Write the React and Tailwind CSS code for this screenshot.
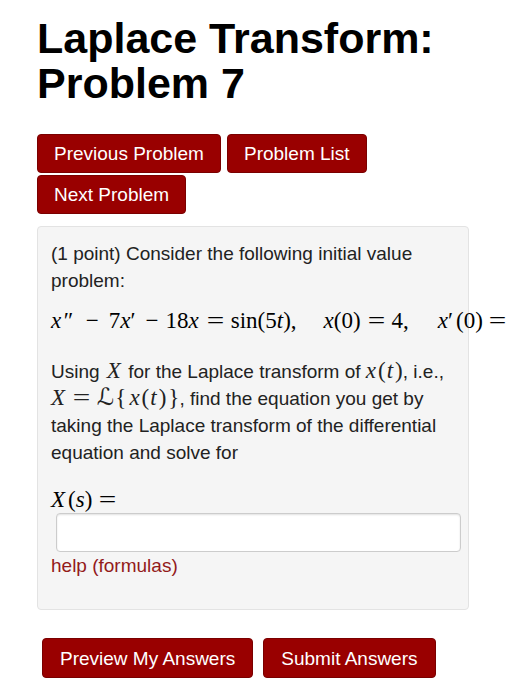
import React from "react";

const sans = { fontFamily: '"Liberation Sans", Arial, Helvetica, sans-serif' };
const serif = { fontFamily: '"Liberation Serif", "Times New Roman", serif' };

function Btn({ children, h = "h-[39px]", px = "px-[16px]" }) {
  return (
    <button
      className={`${h} ${px} bg-[#990000] border border-[#7a0000] rounded-[4px] text-white text-[19px] leading-none flex items-center whitespace-nowrap`}
    >
      {children}
    </button>
  );
}

function I({ children, className = "" }) {
  return <span className={`italic ${className}`}>{children}</span>;
}

function Eq({ className = "" }) {
  return <span className={`inline-block scale-x-[1.35] ${className}`}>=</span>;
}

function XofT() {
  return (
    <span className="text-[23px] leading-none" style={serif}>
      <I>x</I>
      <span className="ml-[2px]">(</span>
      <I className="ml-[1px]">t</I>
      <span className="ml-[2px]">)</span>
    </span>
  );
}

export default function App() {
  return (
    <div className="bg-white w-[507px] min-h-[700px] overflow-hidden text-black" style={sans}>
      <div className="pl-[37px] pr-[10px] pt-[16px]">
        <h1 className="text-[43px] leading-[45px] font-bold">
          Laplace Transform:
          <br />
          Problem 7
        </h1>
      </div>

      <div className="mx-[37px] mt-[28px] flex flex-wrap gap-x-[6px] gap-y-[2px]">
        <Btn>Previous Problem</Btn>
        <Btn>Problem List</Btn>
        <Btn>Next Problem</Btn>
      </div>

      <div className="ml-[37px] w-[432px] mt-[12px] bg-[#f5f5f5] border border-[#e3e3e3] rounded-[4px] pt-[13px] pb-[30px] px-[13px] text-[19px] leading-[27px] text-[#222]">
        <p>(1 point) Consider the following initial value problem:</p>

        <div className="mt-[13px] text-[23px] leading-[27px] whitespace-nowrap text-black" style={serif}>
          <I>x</I>
          <span className="italic ml-[1px]">″</span>
          <span className="ml-[14px]">−</span>
          <span className="ml-[10px]">7</span>
          <I>x</I>
          <span>′</span>
          <span className="ml-[10px]">−</span>
          <span className="ml-[7px]">18</span>
          <I>x</I>
          <Eq className="ml-[10px]" />
          <span className="ml-[9px]">sin(5</span>
          <I>t</I>
          <span>),</span>
          <span className="ml-[27px]">
            <I>x</I>(0)
          </span>
          <Eq className="ml-[9px]" />
          <span className="ml-[9px]">4,</span>
          <span className="ml-[29px]">
            <I>x</I>
          </span>
          <span className="mr-[3px]">′</span>
          <span>(0)</span>
          <Eq className="ml-[8px]" />
        </div>

        <p className="mt-[24px]">
          Using{" "}
          <span className="italic text-[23px] leading-none mx-[2px]" style={serif}>
            X
          </span>{" "}
          for the Laplace transform of <XofT />
          , i.e.,{" "}
          <span className="text-[23px] leading-none" style={serif}>
            <I className="mr-[1px]">X</I>
            <Eq className="ml-[9px]" />
            <span
              className="ml-[9px] text-[24px] leading-none"
              style={{ fontFamily: '"DejaVu Serif", "DejaVu Sans", "Liberation Serif", serif' }}
            >
              ℒ
            </span>
            <span className="ml-[1px]">{"{"}</span>
            <span className="ml-[3px]">
              <XofT />
            </span>
            <span className="ml-[2px]">{"}"}</span>
          </span>
          , find the equation you get by taking the Laplace transform of the differential equation and solve for
        </p>

        <div className="mt-[20px] text-[23px] leading-[27px] text-black" style={serif}>
          <I>X</I>
          <span className="ml-[3px]">(</span>
          <I>s</I>
          <span>)</span>
          <Eq className="ml-[9px]" />
        </div>

        <input
          type="text"
          className="block ml-[5px] w-[405px] h-[39px] bg-white border border-[#cccccc] rounded-[4px] shadow-[inset_0_1px_2px_rgba(0,0,0,0.12)] outline-none"
        />

        <div className="text-[#931a1a]">help (formulas)</div>
      </div>

      <div className="ml-[42px] mt-[28px] flex gap-[10px]">
        <Btn h="h-[40px]" px="px-[17px]">Preview My Answers</Btn>
        <Btn h="h-[40px]" px="px-[17px]">Submit Answers</Btn>
      </div>
    </div>
  );
}
